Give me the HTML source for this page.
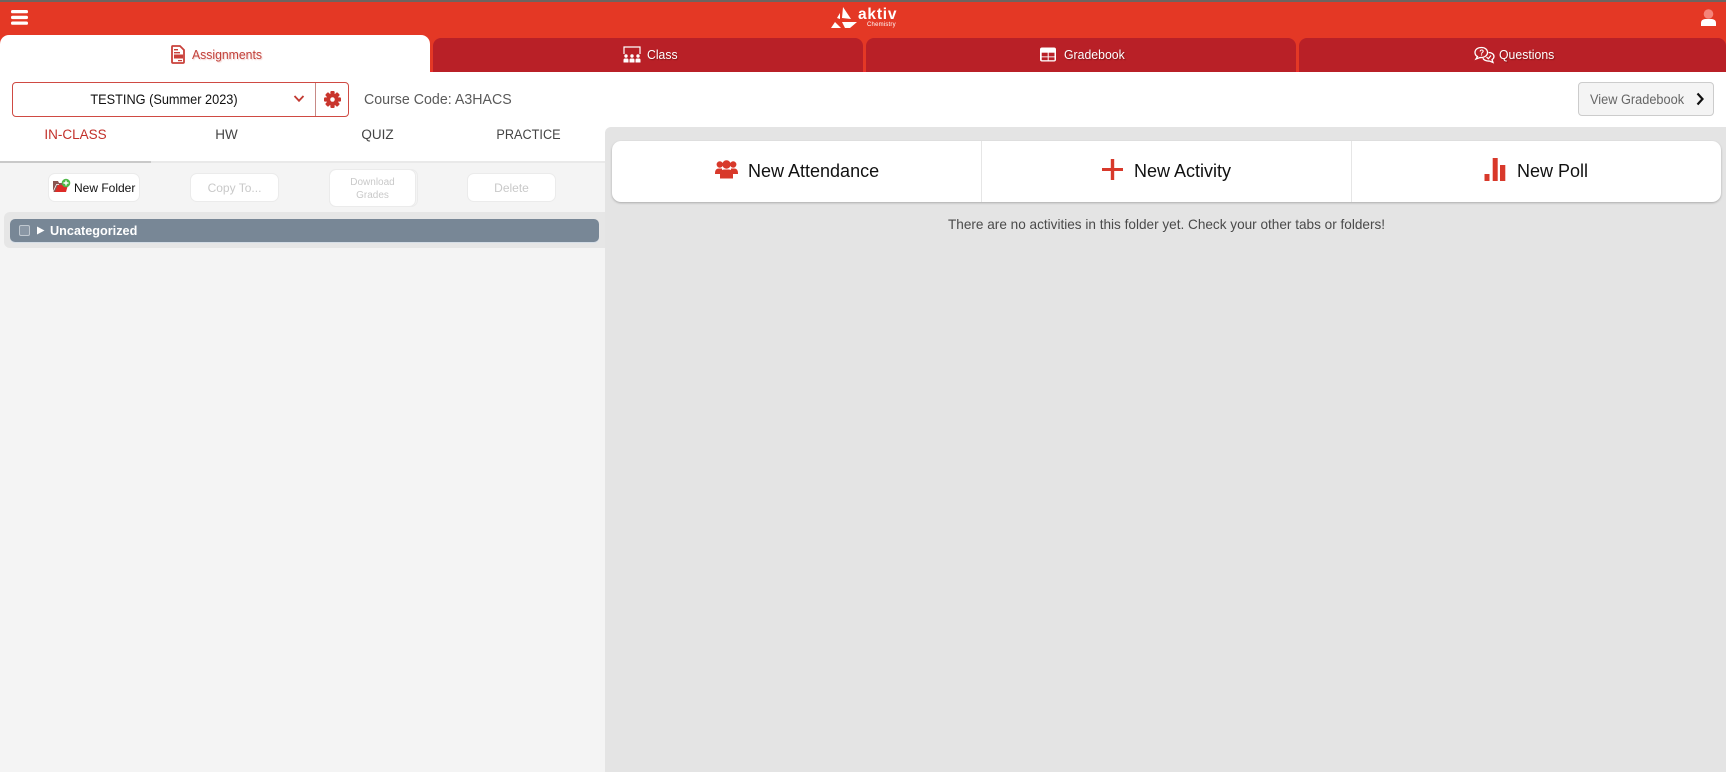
<!DOCTYPE html>
<html><head><meta charset="utf-8"><style>
html,body{margin:0;padding:0;width:1726px;height:772px;overflow:hidden;background:#fff;font-family:"Liberation Sans",sans-serif}
#p{position:relative;width:1726px;height:772px;overflow:hidden;filter:blur(.35px)}
#p div,#p svg{position:absolute;box-sizing:border-box}
.t{white-space:nowrap;line-height:1}
.l{transform-origin:0 50%}
.c{text-align:center}
.tab{top:38px;height:34px;background:#b92027;border-radius:8px 8px 0 0}
.s{text-shadow:1px 1px 1px rgba(70,0,0,.45)}
.b{background:#fff;border:1px solid #ebebeb;border-radius:7px;color:#c9c9c9;font-size:12px;text-align:center;display:flex;align-items:center;justify-content:center;line-height:13px;padding-top:1px}
</style></head><body><div id="p">
<div style="left:0;top:0;width:1726px;height:72px;background:#e43825"></div>
<div style="left:0;top:0;width:1726px;height:2px;background:#6d6460"></div>
<div style="left:0;top:71px;width:1726px;height:1px;background:#ee2a2e"></div>

<svg style="left:11px;top:9px" width="18" height="17" viewBox="0 0 18 17"><g fill="#fff"><rect x="0" y="1" width="17" height="3.300" rx="1.600"/><rect x="0" y="6.800" width="17" height="3.300" rx="1.600"/><rect x="0" y="12.500" width="17" height="3.300" rx="1.600"/></g></svg>

<svg style="left:830px;top:5px" width="32" height="26" viewBox="830 5 32 26"><g fill="#fff"><path d="M843 7 L851 19 L842 18 Z"/><path d="M837 18 L840 13 L840 19 Z"/><path d="M831 28 L835 22 L841 28 Z"/><path d="M842 22 L857 22 L850 28 L845 28 Z"/></g></svg>
<div class="t" style="left:858px;top:7px;font-size:15.500px;font-weight:bold;color:#fff;letter-spacing:.8px">aktiv</div>
<div class="t" style="left:867px;top:22px;font-size:6px;color:#fff;letter-spacing:.2px">Chemistry</div>

<svg style="left:1700px;top:8px" width="17" height="19" viewBox="0 0 17 19"><circle cx="8.500" cy="6" r="4.800" fill="#f5847a"/><path d="M1 18 V15 Q1 11.500 5 11 H12 Q16 11.500 16 15 V18 Z" fill="#fff"/></svg>

<div style="left:0;top:35px;width:430px;height:37px;background:#fff;border-radius:9px 9px 0 0"></div>
<svg style="left:171px;top:45px" width="14" height="19" viewBox="0 0 14 19"><path d="M1.500 1 H9 L13 5 V17 Q13 18 12 18 H2 Q1 18 1 17 V2 Q1 1 1.500 1Z" fill="#fff" stroke="#c9403a" stroke-width="1.800"/><rect x="3" y="4" width="4" height="1.400" fill="#c9403a"/><rect x="3" y="7" width="6" height="1.400" fill="#c9403a"/><rect x="3" y="9.500" width="9" height="4" fill="#c9403a"/><rect x="7" y="15" width="4" height="1.200" fill="#c9403a"/></svg>
<div class="t l" style="left:192px;top:48px;font-size:13px;color:#c2413a;transform:scaleX(.94);text-shadow:1px 1px 1px rgba(200,60,50,.25)">Assignments</div>

<div class="tab" style="left:433px;width:430px"></div>
<svg style="left:622px;top:46px" width="20" height="18" viewBox="0 0 20 18"><path d="M2 8 V1 H18 V8" fill="none" stroke="#fff" stroke-width="1.200"/><g fill="#fff"><circle cx="4" cy="10" r="1.700"/><circle cx="10" cy="10" r="1.700"/><circle cx="16" cy="10" r="1.700"/><path d="M1.500 16.500 V14 Q1.500 12.500 3 12.500 H5 Q6.500 12.500 6.500 14 V16.500Z"/><path d="M7.500 16.500 V14 Q7.500 12.500 9 12.500 H11 Q12.500 12.500 12.500 14 V16.500Z"/><path d="M13.500 16.500 V14 Q13.500 12.500 15 12.500 H17 Q18.500 12.500 18.500 14 V16.500Z"/></g></svg>
<div class="t l s" style="left:647px;top:48px;font-size:13px;color:#fff;transform:scaleX(.94)">Class</div>

<div class="tab" style="left:866px;width:430px"></div>
<svg style="left:1040px;top:47px" width="16" height="15" viewBox="0 0 16 15"><rect width="16" height="14" y=".500" rx="2" fill="#fff"/><rect x="1.700" y="5.700" width="6" height="3.700" fill="#b92027"/><rect x="8.700" y="5.700" width="5.800" height="3.700" fill="#b92027"/><rect x="1.700" y="10.300" width="6" height="2.900" fill="#b92027"/><rect x="8.700" y="10.300" width="5.800" height="2.900" fill="#b92027"/></svg>
<div class="t l s" style="left:1064px;top:48px;font-size:13px;color:#fff;transform:scaleX(.945)">Gradebook</div>

<div class="tab" style="left:1299px;width:427px"></div>
<svg style="left:1474px;top:46px" width="21" height="18" viewBox="0 0 21 18"><path d="M7.500 1.500 C3.500 1.500 1 3.500 1 6.500 C1 8.500 2 9.800 3.500 10.500 L2 13 L6 11.500 C9.500 12 13.500 10 13.500 6.500 C13.500 3.500 11 1.500 7.500 1.500Z" fill="none" stroke="#fff" stroke-width="1.300"/><path d="M14.500 6.500 C17.500 6.500 20 8 20 10.500 C20 12 19 13 18 13.700 L19 16.500 L15.500 15 C12.500 15.300 9.500 14 9 12.200" fill="none" stroke="#fff" stroke-width="1.300"/><text x="5.300" y="9.300" font-family="Liberation Sans" font-size="8" font-weight="bold" fill="#fff">?</text><path d="M12.500 11 L14.300 12.700 L17 9.500" fill="none" stroke="#fff" stroke-width="1.200"/></svg>
<div class="t l s" style="left:1499px;top:48px;font-size:13px;color:#fff;transform:scaleX(.945)">Questions</div>

<div style="left:12px;top:82px;width:337px;height:35px;border:1px solid #cf4a43;border-radius:4px;background:#fff"></div>
<div style="left:315px;top:83px;width:1px;height:33px;background:#c78a86"></div>
<div class="t c" style="left:12px;top:92px;width:304px;font-size:14px;color:#111;transform:scaleX(.91)">TESTING (Summer 2023)</div>
<svg style="left:292px;top:94px" width="14" height="10" viewBox="0 0 14 10"><path d="M2.500 2 L7 6.800 L11.500 2" fill="none" stroke="#c23a33" stroke-width="1.800"/></svg>
<svg style="left:324px;top:91px" width="17" height="17" viewBox="0 0 24 24"><g fill="#c9352d"><rect x="9" y="0" width="6" height="24" rx="1.500"/><rect x="9" y="0" width="6" height="24" rx="1.500" transform="rotate(45 12 12)"/><rect x="9" y="0" width="6" height="24" rx="1.500" transform="rotate(90 12 12)"/><rect x="9" y="0" width="6" height="24" rx="1.500" transform="rotate(135 12 12)"/><circle cx="12" cy="12" r="8.500"/></g><circle cx="12" cy="12" r="3.200" fill="#fff"/></svg>
<div class="t l" style="left:364px;top:93px;font-size:14.500px;color:#5a5a5a;transform:scaleX(.98)">Course Code: A3HACS</div>

<div style="left:1578px;top:82px;width:136px;height:34px;background:#f4f4f4;border:1px solid #ccc;border-radius:4px"></div>
<div class="t l" style="left:1590px;top:93px;font-size:13.500px;color:#666;transform:scaleX(.945)">View Gradebook</div>
<svg style="left:1695px;top:92px" width="10" height="14" viewBox="0 0 10 14"><path d="M2.500 1.500 L7.500 7 L2.500 12.500" fill="none" stroke="#111" stroke-width="2.200"/></svg>

<div style="left:0;top:162px;width:605px;height:610px;background:#f4f4f4"></div>
<div style="left:0;top:161px;width:605px;height:2px;background:#e9e9e9"></div>
<div style="left:0;top:161px;width:151px;height:2px;background:#c9c9c9"></div>
<div class="t c" style="left:0;top:128px;width:151px;font-size:13.500px;color:#c2302a">IN-CLASS</div>
<div class="t c" style="left:151px;top:128px;width:151px;font-size:13.500px;color:#444">HW</div>
<div class="t c" style="left:302px;top:128px;width:151px;font-size:13.500px;color:#444">QUIZ</div>
<div class="t c" style="left:453px;top:128px;width:151px;font-size:13.500px;color:#444;transform:scaleX(.94)">PRACTICE</div>

<div class="b" style="left:48px;top:173px;width:92px;height:29px"></div>
<svg style="left:52px;top:178px" width="19" height="16" viewBox="0 0 19 16"><path d="M1 3 H6 L7 5 H13 V14 H1Z" fill="#8a5550"/><path d="M3 14 L6 7 H16 L14 14Z" fill="#dd2c27"/><path d="M1 14 L4.500 6.500 H7" fill="none" stroke="#fff" stroke-width=".8"/><circle cx="14" cy="5" r="4.300" fill="#4fb848"/><path d="M14 2.500 V7.500 M11.500 5 H16.500" stroke="#fff" stroke-width="1.400"/></svg>
<div class="t" style="left:74px;top:182px;font-size:12px;color:#111">New Folder</div>
<div class="b" style="left:190px;top:173px;width:89px;height:29px">Copy To...</div>
<div class="b" style="left:329px;top:169px;width:87px;height:38px;font-size:10px">Download<br>Grades</div>
<div style="left:329px;top:169px;width:89px;height:38px;border:1px solid #ebebeb;border-radius:7px"></div>
<div class="b" style="left:467px;top:173px;width:89px;height:29px">Delete</div>

<div style="left:4px;top:212px;width:601px;height:36px;background:#e6e6e6;border-radius:6px 0 0 6px"></div>
<div style="left:10px;top:219px;width:589px;height:23px;background:#788796;border-radius:5px;box-shadow:0 1px 0 #d5dde6"></div>
<div style="left:19px;top:225px;width:11px;height:11px;border:1px solid #c0c8d0;border-radius:2px;background:#8a97a5"></div>
<svg style="left:37px;top:226px" width="8" height="9" viewBox="0 0 8 9"><path d="M0 .500 L7.500 4.500 L0 8.500Z" fill="#fff"/></svg>
<div class="t l" style="left:50px;top:224px;font-size:13px;font-weight:bold;color:#fff;transform:scaleX(.975)">Uncategorized</div>

<div style="left:605px;top:127px;width:1121px;height:645px;background:#e4e4e4;border-radius:6px 0 0 0"></div>
<div style="left:612px;top:141px;width:1109px;height:61px;background:#fff;border-radius:9px;box-shadow:0 1px 2px #aaa"></div>
<div style="left:981px;top:141px;width:1px;height:61px;background:#e6e6e6"></div>
<div style="left:1351px;top:141px;width:1px;height:61px;background:#e6e6e6"></div>

<svg style="left:715px;top:160px" width="23" height="19" viewBox="0 0 23 19"><g fill="#d8392b"><circle cx="4.800" cy="4.500" r="3.200"/><circle cx="18.200" cy="4.500" r="3.200"/><path d="M0 13 Q0 8.500 4 8.500 H7 V14 H0Z"/><path d="M23 13 Q23 8.500 19 8.500 H16 V14 H23Z"/><circle cx="11.500" cy="4.500" r="4.200"/><path d="M5 18.500 V14.500 Q5 9.500 9 9.500 H14 Q18 9.500 18 14.500 V18.500Z"/></g></svg>
<div class="t" style="left:748px;top:162px;font-size:18px;color:#111">New Attendance</div>

<svg style="left:1102px;top:159px" width="21" height="21" viewBox="0 0 21 21"><path d="M8.800 0H12.200V9H21V12H12.200V21H8.800V12H0V9H8.800Z" fill="#d8392b"/></svg>
<div class="t" style="left:1134px;top:162px;font-size:18px;color:#111">New Activity</div>

<svg style="left:1484px;top:158px" width="22" height="24" viewBox="0 0 22 24"><g fill="#d8392b"><rect x="0.500" y="16" width="5" height="7"/><rect x="8.700" y="0" width="5" height="23"/><rect x="16" y="7" width="5.300" height="16"/></g></svg>
<div class="t" style="left:1517px;top:162px;font-size:18px;color:#111">New Poll</div>

<div class="t l" style="left:948px;top:217px;font-size:14px;color:#4a4a4a;transform:scaleX(.97)">There are no activities in this folder yet. Check your other tabs or folders!</div>
</div></body></html>
